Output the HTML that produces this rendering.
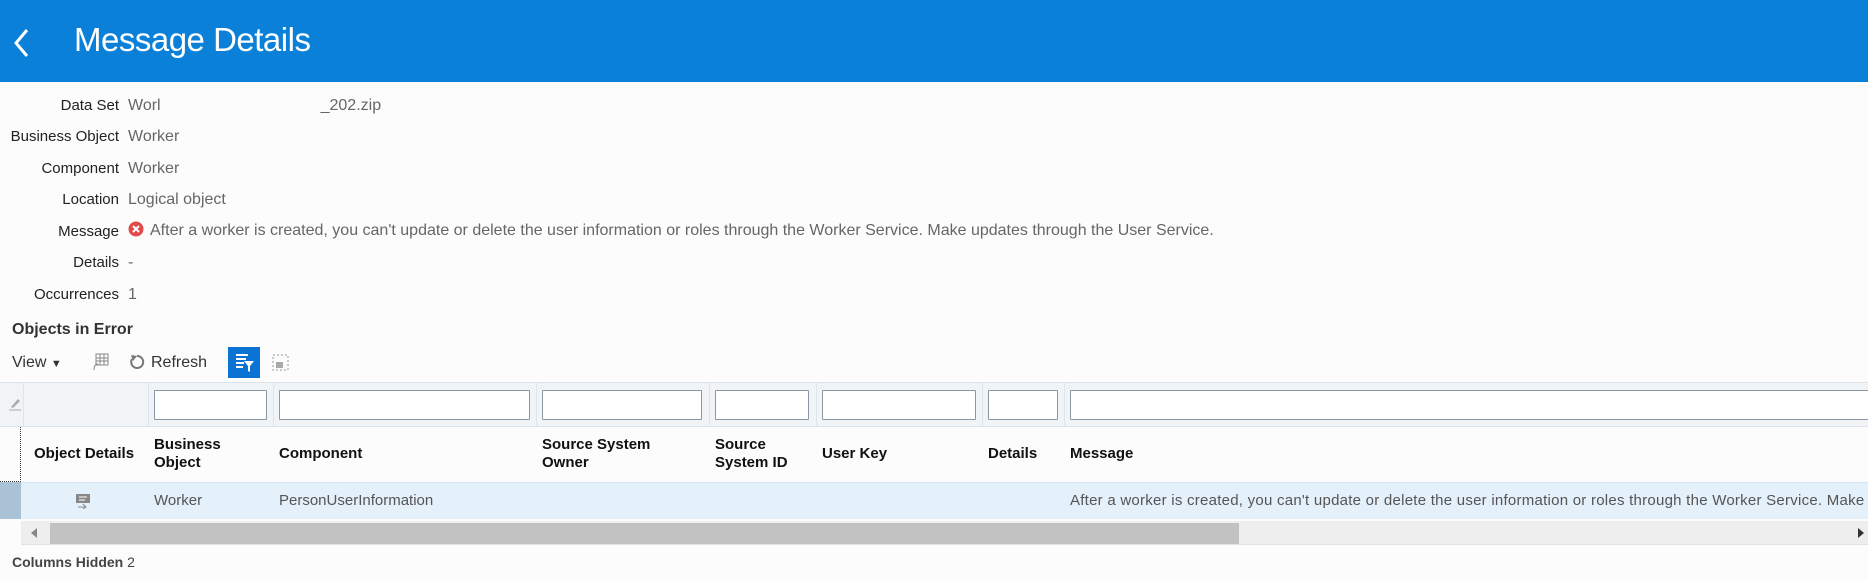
<!DOCTYPE html>
<html><head><meta charset="utf-8"><style>
*{margin:0;padding:0;box-sizing:border-box}
body{width:1868px;height:579px;background:#fcfcfc;font-family:"Liberation Sans",sans-serif;position:relative;overflow:hidden;color:#333}
.hdr{position:absolute;left:0;top:0;width:1868px;height:82px;background:#0a80d8}
.hdr .t{position:absolute;left:74px;top:21px;color:#fff;font-size:33px;font-family:"Liberation Sans",sans-serif;font-weight:normal;letter-spacing:-0.5px}
.a{position:absolute;font-size:15px;white-space:nowrap}
.lbl{color:#222;text-align:right;width:119px;left:0}
.val{left:128px;color:#666;font-size:16px}
.bold{font-weight:bold}
.inp{position:absolute;top:390px;height:30px;border:1px solid #8a98a5;background:#fff;border-radius:1px}
.vl{position:absolute;width:1px;background:#dfe5ea}
.th{position:absolute;top:436px;font-weight:bold;font-size:15px;color:#111;line-height:18px}
.td{position:absolute;top:492px;font-size:15px;color:#555}
</style></head><body>
<div class="hdr">
<svg style="position:absolute;left:12px;top:28px" width="18" height="30"><path d="M15 2 L4 15 L15 28" stroke="#fff" stroke-width="3" fill="none"/></svg>
<div class="t">Message Details</div></div>

<div class="a lbl" style="top:97px">Data Set</div><div class="a val" style="top:97px">Worl<span style="display:inline-block;width:160px"></span>_202.zip</div>
<div class="a lbl" style="top:128px">Business Object</div><div class="a val" style="top:128px">Worker</div>
<div class="a lbl" style="top:160px">Component</div><div class="a val" style="top:160px">Worker</div>
<div class="a lbl" style="top:191px">Location</div><div class="a val" style="top:191px">Logical object</div>
<div class="a lbl" style="top:223px">Message</div>
<svg style="position:absolute;left:128px;top:221px" width="16" height="16"><circle cx="8" cy="8" r="7.5" fill="#e04a4a"/><path d="M5 5 L11 11 M11 5 L5 11" stroke="#fff" stroke-width="2"/></svg>
<div class="a val" style="top:222px;left:150px">After a worker is created, you can't update or delete the user information or roles through the Worker Service. Make updates through the User Service.</div>
<div class="a lbl" style="top:254px">Details</div><div class="a val" style="top:254px">-</div>
<div class="a lbl" style="top:286px">Occurrences</div><div class="a val" style="top:286px">1</div>

<div class="a bold" style="left:12px;top:321px;font-size:16px;color:#333">Objects in Error</div>
<div class="a" style="left:12px;top:354px;color:#333;font-size:16px">View <span style="font-size:11px">&#9660;</span></div>
<svg style="position:absolute;left:92px;top:352px" width="18" height="20"><rect x="4" y="2" width="12" height="11" fill="none" stroke="#888"/><path d="M4 6H16M4 9H16M8 2V13M12 2V13M2 18 Q2 12 6 12" stroke="#888" fill="none"/></svg>
<svg style="position:absolute;left:128px;top:353px" width="18" height="18"><path d="M4 6 A6 6 0 1 0 9 3" stroke="#777" stroke-width="2" fill="none"/><path d="M3 2 L9 3 L5 8Z" fill="#777"/></svg>
<div class="a" style="left:151px;top:354px;font-size:16px;color:#333">Refresh</div>
<div style="position:absolute;left:228px;top:347px;width:32px;height:31px;background:#0a73d3"></div>
<svg style="position:absolute;left:234px;top:353px" width="22" height="20"><path d="M2 2H14M2 6H12M2 10H10M2 14H9" stroke="#fff" stroke-width="2"/><path d="M10 8H20L16 13V19L14 18V13Z" fill="#fff"/></svg>
<svg style="position:absolute;left:272px;top:354px" width="18" height="18"><rect x="1" y="1" width="15" height="15" fill="none" stroke="#999" stroke-dasharray="2 2"/><rect x="4" y="8" width="7" height="6" fill="#aaa"/></svg>

<div style="position:absolute;left:0;top:382px;width:1868px;height:45px;background:#f1f4f6;border-top:1px solid #dde3e8;border-bottom:1px solid #dde3e8"></div>
<svg style="position:absolute;left:8px;top:396px" width="14" height="16"><path d="M3 11 L10 3 L12 5 L5 12Z" fill="#aaa"/><path d="M1 14H13" stroke="#aaa"/></svg>
<div class="vl" style="left:23px;top:382px;height:45px"></div>
<div class="vl" style="left:148px;top:382px;height:45px"></div>
<div class="vl" style="left:273px;top:382px;height:45px"></div>
<div class="vl" style="left:536px;top:382px;height:45px"></div>
<div class="vl" style="left:709px;top:382px;height:45px"></div>
<div class="vl" style="left:816px;top:382px;height:45px"></div>
<div class="vl" style="left:982px;top:382px;height:45px"></div>
<div class="vl" style="left:1064px;top:382px;height:45px"></div>
<div class="inp" style="left:154px;width:113px"></div>
<div class="inp" style="left:279px;width:251px"></div>
<div class="inp" style="left:542px;width:160px"></div>
<div class="inp" style="left:715px;width:94px"></div>
<div class="inp" style="left:822px;width:154px"></div>
<div class="inp" style="left:988px;width:70px"></div>
<div class="inp" style="left:1070px;width:810px"></div>

<div style="position:absolute;left:0;top:427px;width:21px;height:55px;border-right:1px dotted #333;border-bottom:1px dotted #333"></div>
<div class="th" style="left:34px;top:445px">Object Details</div>
<div class="th" style="left:154px">Business<br>Object</div>
<div class="th" style="left:279px;top:445px">Component</div>
<div class="th" style="left:542px">Source System<br>Owner</div>
<div class="th" style="left:715px">Source<br>System ID</div>
<div class="th" style="left:822px;top:445px">User Key</div>
<div class="th" style="left:988px;top:445px">Details</div>
<div class="th" style="left:1070px;top:445px">Message</div>

<div style="position:absolute;left:0;top:482px;width:1868px;height:37px;background:#e4f0fa;border-top:1px solid #d6e3ee"></div>
<div style="position:absolute;left:0;top:482px;width:21px;height:37px;background:#a9c2d6"></div>
<svg style="position:absolute;left:75px;top:493px" width="16" height="16"><rect x="1" y="1" width="14" height="9" fill="#888"/><path d="M4 4H12M4 7H10" stroke="#fff"/><path d="M3 14H10M8 11L11 14L8 16" stroke="#888" fill="none"/></svg>
<div class="td" style="left:154px">Worker</div>
<div class="td" style="left:279px">PersonUserInformation</div>
<div class="td" style="left:1070px;letter-spacing:0.25px">After a worker is created, you can't update or delete the user information or roles through the Worker Service. Make</div>

<div style="position:absolute;left:21px;top:521px;width:1847px;height:24px;background:#eee;border-bottom:1px solid #dde3e8"></div>
<div style="position:absolute;left:50px;top:523px;width:1189px;height:21px;background:#c2c2c2"></div>
<svg style="position:absolute;left:30px;top:527px" width="8" height="12"><path d="M7 1 L1 6 L7 11Z" fill="#888"/></svg>
<svg style="position:absolute;left:1857px;top:527px" width="8" height="12"><path d="M1 1 L7 6 L1 11Z" fill="#333"/></svg>

<div class="a bold" style="left:12px;top:554px;font-size:14px;color:#444">Columns Hidden <span style="font-weight:normal">2</span></div>
</body></html>
